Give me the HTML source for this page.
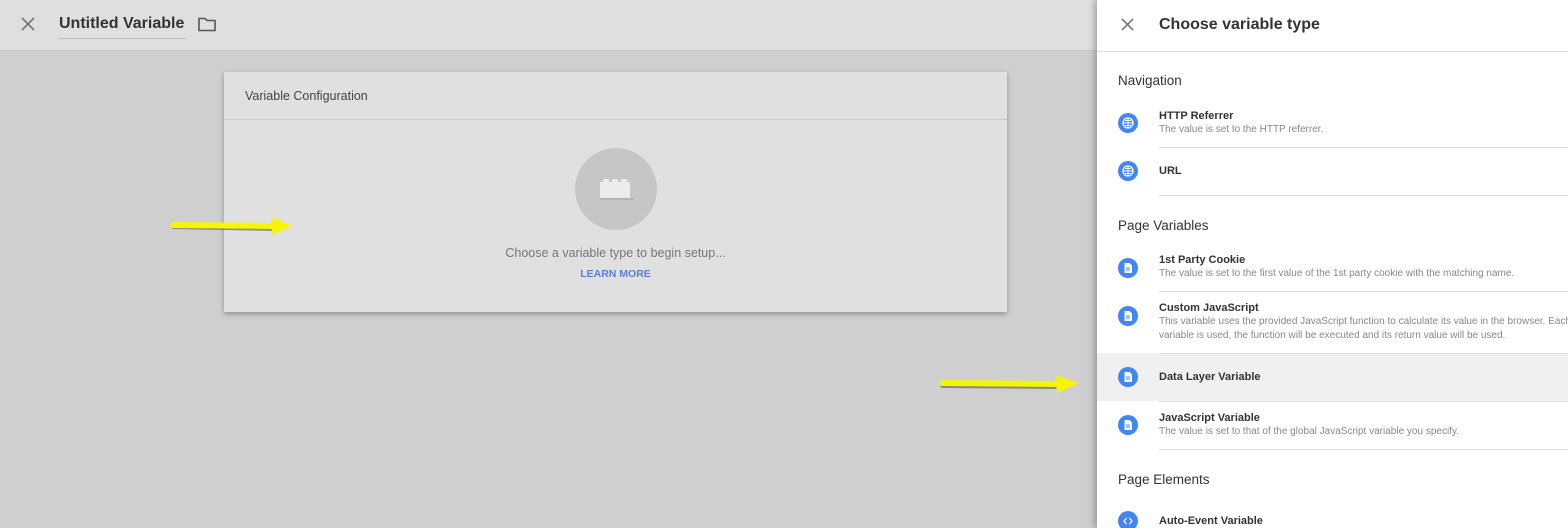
<!DOCTYPE html>
<html><head><style>
*{margin:0;padding:0;box-sizing:border-box}
html,body{width:1568px;height:528px;overflow:hidden}
body{background:#cfcfcf;font-family:"Liberation Sans",Arial,sans-serif;position:relative}
.hdr{position:absolute;left:0;top:0;width:1568px;height:51px;background:#dfdfdf;border-bottom:1px solid #c8c8c8}
.abs{position:absolute}
.card{position:absolute;left:224px;top:72px;width:783px;height:240px;background:#e0e0e0;box-shadow:0 2px 5px rgba(0,0,0,.3)}
.panel{position:absolute;left:1097px;top:0;width:471px;height:528px;background:#fff;box-shadow:-3px 0 6px rgba(0,0,0,.25)}
.sec{position:absolute;left:21px;font-size:13.5px;color:#333}
.t{position:absolute;left:62px;font-size:11px;font-weight:bold;color:#333}
.d{position:absolute;left:62px;font-size:10px;color:#888;white-space:nowrap}
.div{position:absolute;left:62px;right:0;height:1px;background:#e0e0e0}
.ic{position:absolute;left:21px;width:20px;height:20px;border-radius:50%;background:#4285f4}
.ic svg{position:absolute;left:4px;top:4px}
</style></head><body>
<div class="hdr">
<svg class="abs" style="left:21px;top:17px" width="14" height="14" viewBox="0 0 14 14"><path d="M1 1L13 13M13 1L1 13" stroke="#757575" stroke-width="1.6"/></svg>
<div class="abs" style="left:59px;top:15px;font-size:16px;font-weight:bold;color:#333">Untitled Variable</div>
<div class="abs" style="left:59px;top:38px;width:127px;height:1px;background:#bbb"></div>
<svg class="abs" style="left:198px;top:17px" width="18" height="15" viewBox="0 0 18 15"><path d="M1 1.5h6l2 2h8v10H1z" fill="none" stroke="#555" stroke-width="1.6"/></svg>
</div>
<div class="card">
<div class="abs" style="left:21px;top:17px;font-size:12.5px;color:#444">Variable Configuration</div>
<div class="abs" style="left:0;top:47px;width:783px;height:1px;background:#cacaca"></div>
<div class="abs" style="left:351px;top:76px;width:82px;height:82px;border-radius:50%;background:#c6c6c6"></div>
<svg class="abs" style="left:374px;top:104px" width="36" height="26" viewBox="0 0 36 26"><path d="M2 6h3V3h6v3h3V3h6v3h3V3h6v3h3v16H2z" fill="#ececec"/><rect x="2" y="22" width="34" height="2" fill="#b5b5b5"/></svg>
<div class="abs" style="left:0;width:783px;text-align:center;top:174px;font-size:12.5px;color:#777">Choose a variable type to begin setup...</div>
<div class="abs" style="left:0;width:783px;text-align:center;top:196px;font-size:10.5px;font-weight:bold;color:#5b7fd4">LEARN MORE</div>
</div>
<svg class="abs" style="left:168px;top:214px" width="130" height="26" viewBox="0 0 130 26"><path d="M6 12L108 14" stroke="#444" stroke-width="6" stroke-linecap="round" opacity=".5"/><path d="M5 11L106 12" stroke="#f5f50a" stroke-width="6" stroke-linecap="round"/><path d="M103 3L124 12L104 21z" fill="#f5f50a"/></svg>
<svg class="abs" style="left:937px;top:372px" width="145" height="26" viewBox="0 0 145 26"><path d="M6 13L126 14" stroke="#444" stroke-width="6" stroke-linecap="round" opacity=".5"/><path d="M5 11L124 12" stroke="#f5f50a" stroke-width="6" stroke-linecap="round"/><path d="M118 3L142 11L120 21z" fill="#f5f50a"/></svg>
<div class="panel">
<svg class="abs" style="left:24px;top:18px" width="13" height="13" viewBox="0 0 14 14"><path d="M1 1L13 13M13 1L1 13" stroke="#757575" stroke-width="1.6"/></svg>
<div class="abs" style="left:62px;top:16px;font-size:16px;font-weight:bold;color:#333">Choose variable type</div>
<div class="abs" style="left:0;top:51px;width:471px;height:1px;background:#e0e0e0"></div>
<div class="sec" style="top:73px">Navigation</div>
<div class="ic" style="top:113px"><svg width="12" height="12" viewBox="0 0 12 12"><circle cx="6" cy="6" r="5" fill="none" stroke="#fff" stroke-width="1.3"/><path d="M1 6h10M6 1v10M3 3.5h6M3 8.5h6" stroke="#fff" stroke-width="1"/></svg></div>
<div class="t" style="top:110px">HTTP Referrer</div>
<div class="d" style="top:124px">The value is set to the HTTP referrer.</div>
<div class="div" style="top:147px"></div>
<div class="ic" style="top:161px"><svg width="12" height="12" viewBox="0 0 12 12"><circle cx="6" cy="6" r="5" fill="none" stroke="#fff" stroke-width="1.3"/><path d="M1 6h10M6 1v10M3 3.5h6M3 8.5h6" stroke="#fff" stroke-width="1"/></svg></div>
<div class="t" style="top:165px">URL</div>
<div class="div" style="top:195px"></div>
<div class="sec" style="top:218px">Page Variables</div>
<div class="ic" style="top:258px"><svg width="12" height="12" viewBox="0 0 12 12"><path d="M2.5 1h5l2.5 2.5V11h-7.5z" fill="#fff"/><path d="M4 6h4M4 8h4" stroke="#4285f4" stroke-width=".9"/></svg></div>
<div class="t" style="top:254px">1st Party Cookie</div>
<div class="d" style="top:268px">The value is set to the first value of the 1st party cookie with the matching name.</div>
<div class="div" style="top:291px"></div>
<div class="ic" style="top:306px"><svg width="12" height="12" viewBox="0 0 12 12"><path d="M2.5 1h5l2.5 2.5V11h-7.5z" fill="#fff"/><path d="M4 6h4M4 8h4" stroke="#4285f4" stroke-width=".9"/></svg></div>
<div class="t" style="top:302px">Custom JavaScript</div>
<div class="d" style="top:316px">This variable uses the provided JavaScript function to calculate its value in the browser. Each time the</div>
<div class="d" style="top:330px">variable is used, the function will be executed and its return value will be used.</div>
<div class="abs" style="left:0;top:353px;width:471px;height:48px;background:#f0f0f0"></div>
<div class="div" style="top:353px"></div>
<div class="ic" style="top:367px"><svg width="12" height="12" viewBox="0 0 12 12"><path d="M2.5 1h5l2.5 2.5V11h-7.5z" fill="#fff"/><path d="M4 6h4M4 8h4" stroke="#4285f4" stroke-width=".9"/></svg></div>
<div class="t" style="top:371px">Data Layer Variable</div>
<div class="div" style="top:401px"></div>
<div class="ic" style="top:415px"><svg width="12" height="12" viewBox="0 0 12 12"><path d="M2.5 1h5l2.5 2.5V11h-7.5z" fill="#fff"/><path d="M4 6h4M4 8h4" stroke="#4285f4" stroke-width=".9"/></svg></div>
<div class="t" style="top:412px">JavaScript Variable</div>
<div class="d" style="top:426px">The value is set to that of the global JavaScript variable you specify.</div>
<div class="div" style="top:449px"></div>
<div class="sec" style="top:472px">Page Elements</div>
<div class="ic" style="top:511px"><svg width="12" height="12" viewBox="0 0 12 12"><path d="M4.5 3L2 6l2.5 3M7.5 3L10 6l-2.5 3" fill="none" stroke="#fff" stroke-width="1.3"/></svg></div>
<div class="t" style="top:515px">Auto-Event Variable</div>
</div>
</body></html>
